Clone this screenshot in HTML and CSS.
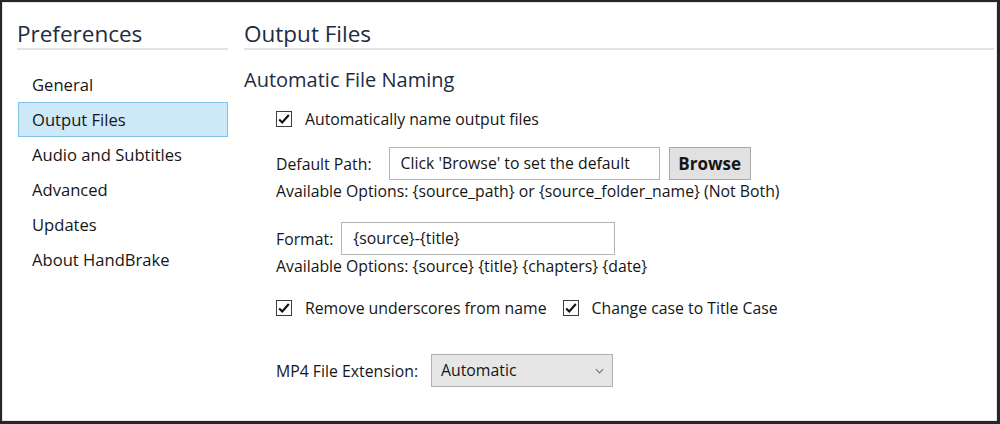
FILE: index.html
```html
<!DOCTYPE html>
<html>
<head>
<meta charset="utf-8">
<link rel="stylesheet" href="styles.css">
</head>
<body>
<div class="frame">
  <div class="window">
    <aside class="sidebar">
      <h1 class="title">Preferences</h1>
      <nav class="nav">
        <div class="nav-item">General</div>
        <div class="nav-item selected">Output Files</div>
        <div class="nav-item">Audio and Subtitles</div>
        <div class="nav-item">Advanced</div>
        <div class="nav-item">Updates</div>
        <div class="nav-item">About HandBrake</div>
      </nav>
    </aside>
    <main class="main">
      <h1 class="title">Output Files</h1>
      <h2 class="section">Automatic File Naming</h2>
      <div class="content">
        <label class="check row-auto">
          <span class="box"><svg viewBox="0 0 16 16" width="14" height="14"><path d="M2.5 8.5 L6 12 L13.5 3.5" fill="none" stroke="#111" stroke-width="2.4"/></svg></span>
          <span>Automatically name output files</span>
        </label>
        <div class="field row-path">
          <span class="label label-path">Default Path:</span>
          <span class="input path-input">Click 'Browse' to set the default</span>
          <span class="button">Browse</span>
        </div>
        <div class="hint">Available Options: {source_path} or {source_folder_name} (Not Both)</div>
        <div class="field row-format">
          <span class="label label-format">Format:</span>
          <span class="input format-input">{source}-{title}</span>
        </div>
        <div class="hint">Available Options: {source} {title} {chapters} {date}</div>
        <div class="checks-row">
          <label class="check">
            <span class="box"><svg viewBox="0 0 16 16" width="14" height="14"><path d="M2.5 8.5 L6 12 L13.5 3.5" fill="none" stroke="#111" stroke-width="2.4"/></svg></span>
            <span>Remove underscores from name</span>
          </label>
          <label class="check">
            <span class="box"><svg viewBox="0 0 16 16" width="14" height="14"><path d="M2.5 8.5 L6 12 L13.5 3.5" fill="none" stroke="#111" stroke-width="2.4"/></svg></span>
            <span>Change case to Title Case</span>
          </label>
        </div>
        <div class="field row-mp4">
          <span class="label">MP4 File Extension:</span>
          <span class="select">Automatic<svg class="chev" viewBox="0 0 10 6" width="9" height="6"><path d="M1 1 L5 5 L9 1" fill="none" stroke="#777" stroke-width="1.3"/></svg></span>
        </div>
      </div>
    </main>
  </div>
</div>
</body>
</html>
```

FILE: styles.css
```css
html, body {
  margin: 0;
  padding: 0;
  background: #ffffff;
}
.frame {
  width: 1000px;
  height: 424px;
  box-sizing: border-box;
  border-style: solid;
  border-color: #262626;
  border-width: 2px 3px 3px 2px;
  background: #ffffff;
}
.window {
  height: 100%;
  box-sizing: border-box;
  border: 1px solid #e6e6e6;
  display: flex;
  font-family: "Open Sans", "Noto Sans", sans-serif;
  color: #161616;
  font-size: 15.8px;
}
.sidebar {
  width: 211px;
  margin-left: 14px;
  flex: none;
}
.main {
  flex: 1;
  margin-left: 16px;
  margin-right: 2px;
}
.title {
  margin: 18px 0 0 0;
  font-weight: 400;
  font-size: 22.5px;
  line-height: 26px;
  color: #1e2c40;
  padding-bottom: 1px;
  border-bottom: 2px solid #e3e3e3;
}
.nav {
  margin-top: 17px;
  margin-left: 1px;
}
.nav-item {
  height: 35px;
  line-height: 33px;
  padding-left: 13px;
  box-sizing: border-box;
  border: 1px solid transparent;
  font-size: 16.6px;
}
.nav-item.selected {
  background: #cde8f6;
  border-color: #7ec3ea;
}
.section {
  margin: 17px 0 0 0;
  font-weight: 400;
  font-size: 20px;
  line-height: 26px;
  color: #1e2c40;
}
.content {
  padding-left: 32px;
}
.check {
  display: inline-flex;
  align-items: center;
  gap: 14px;
  height: 22px;
}
.box {
  width: 14px;
  height: 14px;
  border: 1px solid #3c3c3c;
  display: inline-flex;
  align-items: center;
  justify-content: center;
  background: #fff;
  flex: none;
}
.row-auto {
  margin-top: 15px;
  display: flex;
  gap: 13px;
}
.field {
  display: flex;
  align-items: center;
  height: 33px;
}
.row-path {
  margin-top: 17px;
}
.label {
  margin-right: 13px;
}
.label-path {
  margin-right: 17px;
}
.label-format {
  margin-right: 8px;
}
.input {
  height: 33px;
  box-sizing: border-box;
  border: 1px solid #b5b5b5;
  line-height: 31px;
  padding-left: 11px;
  background: #fff;
}
.path-input {
  width: 271px;
}
.button {
  margin-left: 9px;
  width: 82px;
  height: 33px;
  box-sizing: border-box;
  background: #e1e1e1;
  border: 1px solid #a8a8a8;
  font-weight: 700;
  font-size: 17px;
  text-align: center;
  line-height: 31px;
}
.hint {
  height: 22px;
  line-height: 22px;
}
.row-format {
  margin-top: 20px;
}
.format-input {
  width: 274px;
}
.checks-row {
  margin-top: 20px;
  display: flex;
  gap: 16px;
}
.checks-row .check {
  gap: 13px;
}
.row-mp4 {
  margin-top: 35px;
}
.select {
  position: relative;
  width: 182px;
  height: 33px;
  box-sizing: border-box;
  background: #e6e6e6;
  border: 1px solid #b0b0b0;
  line-height: 31px;
  padding-left: 9px;
}
.chev {
  position: absolute;
  right: 8px;
  top: 13px;
}
```
